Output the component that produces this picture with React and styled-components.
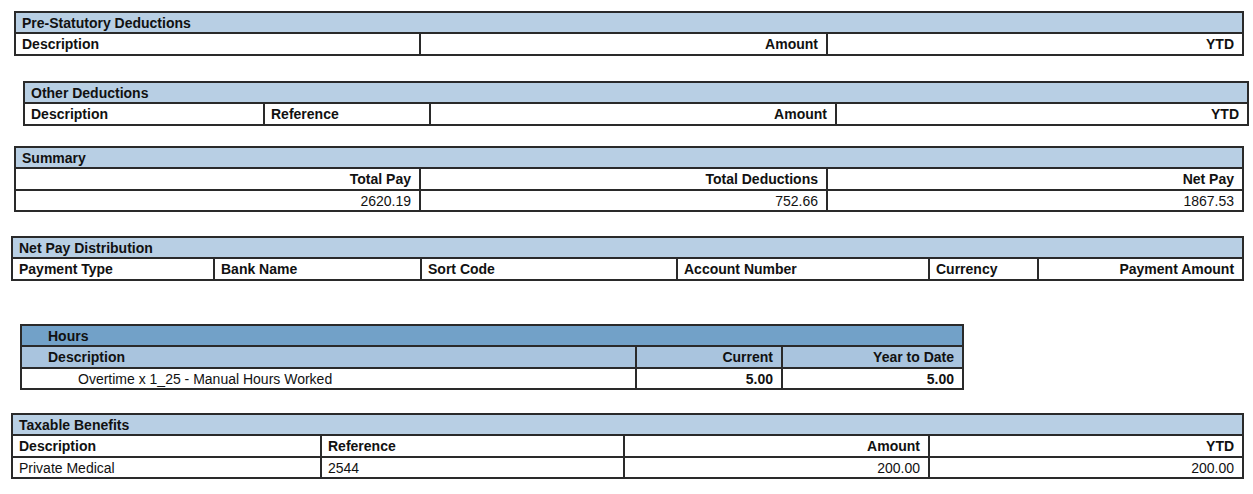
import React from "react";
import styled, { createGlobalStyle } from "styled-components";

const Global = createGlobalStyle`
  body { margin: 0; background: #fff; font-family: "Liberation Sans", Arial, sans-serif; color: #111; }
`;

const Page = styled.div`
  padding-top: 11px;
  display: flex;
  flex-direction: column;
  align-items: flex-start;
`;

const Table = styled.table`
  border-collapse: collapse;
  table-layout: fixed;
  width: ${p => p.$w}px;
  margin-left: ${p => p.$left}px;
  margin-top: ${p => p.$top}px;
  font-size: 14px;
  border: 2px solid #2a2a2a;
`;

const TitleCell = styled.td`
  background: ${p => (p.$dark ? "#72a1c8" : "#b8cfe4")};
  font-weight: bold;
  height: 19px;
  padding: 0 0 0 ${p => p.$indent || 6}px;
  border: 2px solid #2a2a2a;
  line-height: 18px;
`;

const Head = styled.td`
  background: ${p => (p.$tint ? "#a9c4de" : "#fff")};
  font-weight: bold;
  height: 20px;
  padding: 0 ${p => (p.$right ? 8 : 4)}px 0 ${p => p.$indent || 6}px;
  text-align: ${p => (p.$right ? "right" : "left")};
  border: 2px solid #2a2a2a;
  border-left-width: ${p => (p.$noLeft ? 0 : 2)}px;
  white-space: nowrap;
  overflow: hidden;
`;

const Data = styled.td`
  height: 19px;
  padding: 0 ${p => (p.$right ? 8 : 4)}px 0 ${p => p.$indent || 6}px;
  text-align: ${p => (p.$right ? "right" : "left")};
  font-weight: ${p => (p.$bold ? "bold" : "normal")};
  border: 2px solid #2a2a2a;
  white-space: nowrap;
`;

function Cols({ widths }) {
  return (
    <colgroup>
      {widths.map((w, i) => (
        <col key={i} style={{ width: w }} />
      ))}
    </colgroup>
  );
}

export default function App() {
  return (
    <>
      <Global />
      <Page>
        <Table $w={1228} $left={14} $top={0}>
          <Cols widths={[405, 407, 416]} />
          <tbody>
            <tr><TitleCell colSpan={3}>Pre-Statutory Deductions</TitleCell></tr>
            <tr><Head>Description</Head><Head $right>Amount</Head><Head $right>YTD</Head></tr>
          </tbody>
        </Table>

        <Table $w={1224} $left={23} $top={25}>
          <Cols widths={[240, 166, 406, 412]} />
          <tbody>
            <tr><TitleCell colSpan={4}>Other Deductions</TitleCell></tr>
            <tr><Head>Description</Head><Head>Reference</Head><Head $right>Amount</Head><Head $right>YTD</Head></tr>
          </tbody>
        </Table>

        <Table $w={1228} $left={14} $top={20}>
          <Cols widths={[405, 407, 416]} />
          <tbody>
            <tr><TitleCell colSpan={3}>Summary</TitleCell></tr>
            <tr><Head $right>Total Pay</Head><Head $right>Total Deductions</Head><Head $right>Net Pay</Head></tr>
            <tr><Data $right>2620.19</Data><Data $right>752.66</Data><Data $right>1867.53</Data></tr>
          </tbody>
        </Table>

        <Table $w={1231} $left={11} $top={24}>
          <Cols widths={[202, 207, 256, 252, 109, 205]} />
          <tbody>
            <tr><TitleCell colSpan={6}>Net Pay Distribution</TitleCell></tr>
            <tr>
              <Head>Payment Type</Head><Head>Bank Name</Head><Head>Sort Code</Head>
              <Head>Account Number</Head><Head>Currency</Head><Head $right>Payment Amount</Head>
            </tr>
          </tbody>
        </Table>

        <Table $w={942} $left={20} $top={43}>
          <Cols widths={[615, 146, 181]} />
          <tbody>
            <tr><TitleCell colSpan={3} $dark $indent={26}>Hours</TitleCell></tr>
            <tr><Head $tint $indent={26}>Description</Head><Head $tint $right>Current</Head><Head $tint $right>Year to Date</Head></tr>
            <tr><Data $indent={56}>Overtime x 1_25 - Manual Hours Worked</Data><Data $right $bold>5.00</Data><Data $right $bold>5.00</Data></tr>
          </tbody>
        </Table>

        <Table $w={1231} $left={11} $top={23}>
          <Cols widths={[309, 303, 305, 314]} />
          <tbody>
            <tr><TitleCell colSpan={4}>Taxable Benefits</TitleCell></tr>
            <tr><Head>Description</Head><Head>Reference</Head><Head $right>Amount</Head><Head $right>YTD</Head></tr>
            <tr><Data>Private Medical</Data><Data>2544</Data><Data $right>200.00</Data><Data $right>200.00</Data></tr>
          </tbody>
        </Table>
      </Page>
    </>
  );
}
